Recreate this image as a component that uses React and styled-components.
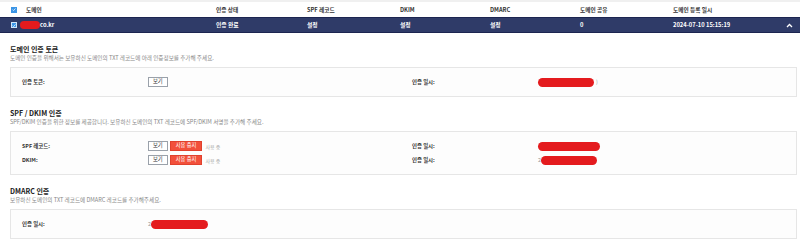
import React from 'react'
import styled, { createGlobalStyle } from 'styled-components'

const GlobalStyle = createGlobalStyle`
  html, body {
    margin: 0;
    padding: 0;
    background: #fff;
    font-family: "Noto Sans CJK KR", "Noto Sans", sans-serif;
    color: #333;
  }
`;

const COLS = '15px 190px 91px 93px 90px 90px 93px 1fr 14px';

const Page = styled.div`
  width: 800px;
  height: 242px;
  overflow: hidden;
  border-top: 2px solid #f0f0f0;
  box-sizing: border-box;
`;

const HeadRow = styled.div`
  display: grid;
  grid-template-columns: ${COLS};
  align-items: center;
  height: 15px;
  padding-left: 11px;
  font-size: 5.7px;
  font-weight: 700;
  color: #333;
`;

const DataRow = styled.div`
  display: grid;
  grid-template-columns: ${COLS};
  align-items: center;
  height: 14px;
  padding-left: 11px;
  background: #2f3b68;
  border-top: 1px solid #1c2550;
  border-bottom: 1px solid #1c2550;
  font-size: 5.8px;
  font-weight: 700;
  color: #fff;
`;

const Cell = styled.div`
  display: flex;
  align-items: center;
  white-space: nowrap;
  line-height: 1;
`;

const Check = styled.span`
  display: inline-flex;
  align-items: center;
  justify-content: center;
  width: 6px;
  height: 6px;
  background: #3b95e6;
  border: 0.5px solid ${({ $light }) => ($light ? '#cfe4f8' : '#3b95e6')};
  box-sizing: border-box;
`;

const Redact = styled.span`
  display: inline-block;
  width: ${({ $w }) => $w}px;
  height: ${({ $h }) => $h || 9}px;
  margin-left: ${({ $ml }) => $ml || 0}px;
  background: #e41b1e;
  border-radius: 999px;
  flex-shrink: 0;
`;

const Content = styled.div`
  padding: 11px 3px 0 10px;
`;

const Section = styled.section`
  margin-bottom: 11px;
`;

const Title = styled.h3`
  margin: 0;
  font-size: 7px;
  line-height: 10px;
  font-weight: 700;
  color: #222;
`;

const Sub = styled.p`
  margin: 0 0 4px;
  font-size: 5.6px;
  line-height: 9px;
  color: #888;
`;

const Box = styled.div`
  display: grid;
  grid-template-columns: 390px 1fr;
  padding: 7px 0 7px 11px;
  border: 1px solid #e6e6e6;
  background: #fdfdfd;
`;

const Field = styled.div`
  display: flex;
  align-items: center;
  height: 14px;
  font-size: 5.4px;
`;

const Label = styled.span`
  width: 126px;
  flex-shrink: 0;
  font-weight: 700;
  color: #333;
`;

const Value = styled.span`
  display: flex;
  align-items: center;
  gap: 2px;
  color: #999;
`;

const Btn = styled.button`
  font-family: inherit;
  font-size: 5.3px;
  line-height: 1;
  height: 10px;
  padding: 0 ${({ $danger }) => ($danger ? '5px' : '4px')};
  border: 1px solid ${({ $danger }) => ($danger ? '#e0412d' : '#9aa1aa')};
  background: ${({ $danger }) => ($danger ? '#f2503b' : '#fff')};
  color: ${({ $danger }) => ($danger ? '#fff' : '#333')};
  border-radius: 0;
  cursor: pointer;
`;

const Small = styled.span`
  margin-left: 1px;
  color: #aaa;
  font-size: 5px;
`;

const CheckIcon = () => (
  <svg width="5" height="5" viewBox="0 0 10 10">
    <path d="M1.5 5.2 L4 7.6 L8.6 2.4" fill="none" stroke="#fff" strokeWidth="1.8" />
  </svg>
);

const ChevronUp = () => (
  <svg width="7" height="5" viewBox="0 0 14 10">
    <path d="M2 8 L7 3 L12 8" fill="none" stroke="#fff" strokeWidth="2.6" />
  </svg>
);

const Row = ({ label, children }) => (
  <Field>
    <Label>{label}</Label>
    <Value>{children}</Value>
  </Field>
);

export default function App() {
  return (
    <Page>
      <GlobalStyle />
      <HeadRow>
        <Cell><Check><CheckIcon /></Check></Cell>
        <Cell>도메인</Cell>
        <Cell>인증 상태</Cell>
        <Cell>SPF 레코드</Cell>
        <Cell>DKIM</Cell>
        <Cell>DMARC</Cell>
        <Cell>도메인 공유</Cell>
        <Cell>도메인 등록 일시</Cell>
        <Cell />
      </HeadRow>
      <DataRow>
        <Cell><Check $light><CheckIcon /></Check></Cell>
        <Cell><Redact $w={20} $h={8} $ml={-6} />co.kr</Cell>
        <Cell>인증 완료</Cell>
        <Cell>설정</Cell>
        <Cell>설정</Cell>
        <Cell>설정</Cell>
        <Cell>0</Cell>
        <Cell>2024-07-10 15:15:19</Cell>
        <Cell><ChevronUp /></Cell>
      </DataRow>

      <Content>
        <Section>
          <Title>도메인 인증 토큰</Title>
          <Sub>도메인 인증을 위해서는 보유하신 도메인의 TXT 레코드에 아래 인증정보를 추가해 주세요.</Sub>
          <Box>
            <Row label="인증 토큰:"><Btn>보기</Btn></Row>
            <Row label="인증 일시:"><Redact $w={56} />)</Row>
          </Box>
        </Section>

        <Section>
          <Title>SPF / DKIM 인증</Title>
          <Sub>SPF/DKIM 인증을 위한 정보를 제공합니다. 보유하신 도메인의 TXT 레코드에 SPF/DKIM 서명을 추가해 주세요.</Sub>
          <Box>
            <Row label="SPF 레코드:">
              <Btn>보기</Btn><Btn $danger>사용 중지</Btn><Small>사용 중</Small>
            </Row>
            <Row label="인증 일시:"><Redact $w={62} /></Row>
            <Row label="DKIM:">
              <Btn>보기</Btn><Btn $danger>사용 중지</Btn><Small>사용 중</Small>
            </Row>
            <Row label="인증 일시:">2<Redact $w={56} $ml={-2} /></Row>
          </Box>
        </Section>

        <Section>
          <Title>DMARC 인증</Title>
          <Sub>보유하신 도메인의 TXT 레코드에 DMARC 레코드를 추가해주세요.</Sub>
          <Box>
            <Row label="인증 일시:">2<Redact $w={57} $ml={-2} /></Row>
          </Box>
        </Section>
      </Content>
    </Page>
  );
}
